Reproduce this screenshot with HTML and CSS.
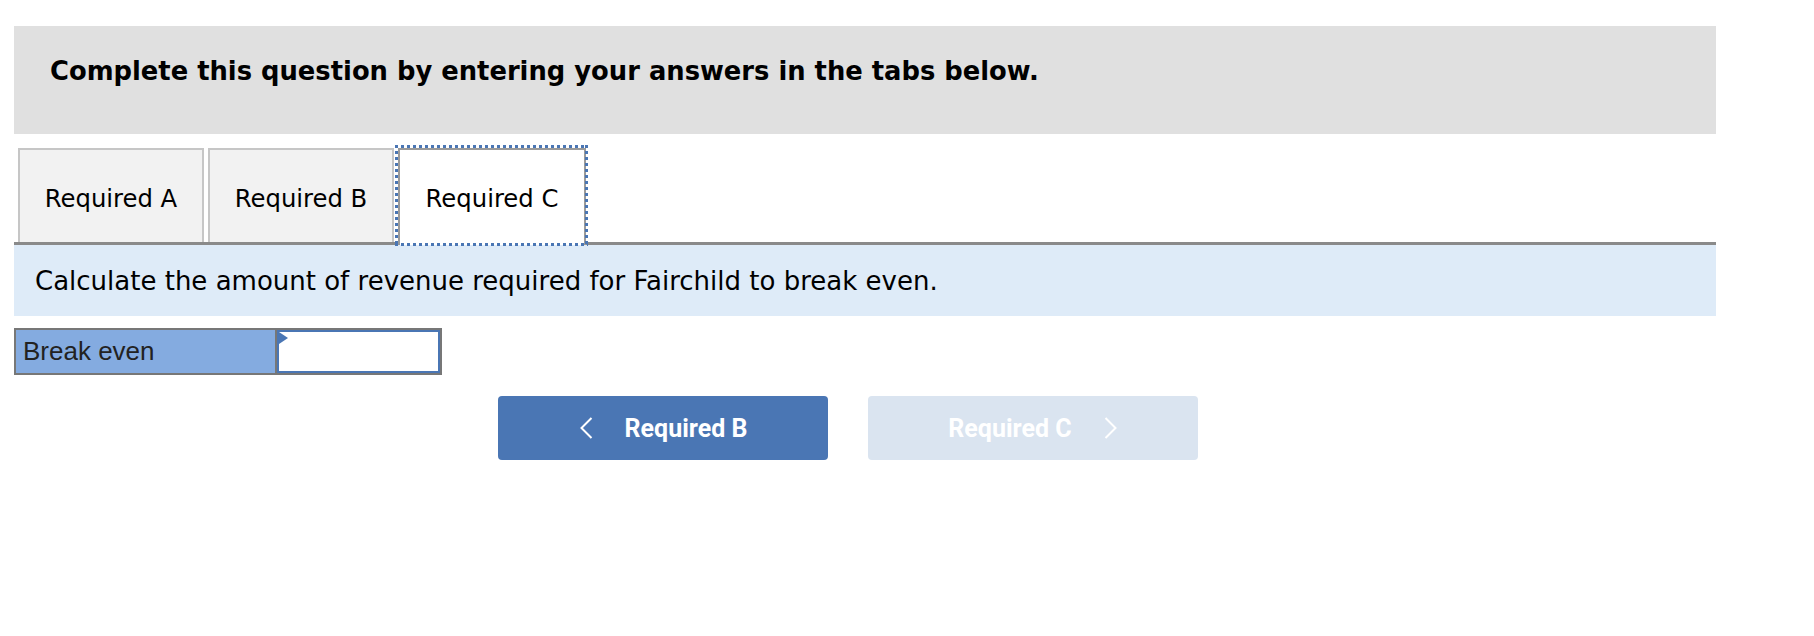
FILE: index.html
```html
<!DOCTYPE html>
<html lang="en">
<head>
<meta charset="utf-8">
<title>Required C</title>
<link rel="stylesheet" href="styles.css">
</head>
<body>
<div class="page">
  <div class="header">
    <p class="header-text">Complete this question by entering your answers in the tabs below.</p>
  </div>
  <div class="tabs">
    <div class="tab">Required A</div>
    <div class="tab">Required B</div>
    <div class="tab tab-active">Required C</div>
  </div>
  <div class="band">Calculate the amount of revenue required for Fairchild to break even.</div>
  <div class="answer-row">
    <div class="answer-label">Break even</div>
    <div class="answer-input"><span class="flag"></span></div>
  </div>
  <div class="nav">
    <div class="btn btn-prev">
      <svg class="chev" width="14" height="24" viewBox="0 0 14 24"><path d="M12.5 2 L2.5 12 L12.5 22" fill="none" stroke="#fff" stroke-width="2"/></svg>
      <span>Required B</span>
    </div>
    <div class="btn btn-next">
      <span>Required C</span>
      <svg class="chev" width="14" height="24" viewBox="0 0 14 24"><path d="M1.5 2 L11.5 12 L1.5 22" fill="none" stroke="#fff" stroke-width="2"/></svg>
    </div>
  </div>
</div>
</body>
</html>
```
FILE: styles.css
```css
html, body {
  margin: 0;
  padding: 0;
  background: #fff;
}
.page {
  padding: 26px 0 0 14px;
  width: 1702px;
  font-family: "DejaVu Sans", Verdana, sans-serif;
  color: #000;
}
.header {
  background: #e0e0e0;
  height: 108px;
  box-sizing: border-box;
  padding: 31px 0 0 36px;
}
.header-text {
  margin: 0;
  font-weight: bold;
  font-size: 25.8px;
  line-height: 29px;
}
.tabs {
  margin-top: 14px;
  display: flex;
  padding-left: 4px;
  border-bottom: 3px solid #8a8a8a;
}
.tab {
  width: 186px;
  height: 94px;
  box-sizing: border-box;
  border: 2px solid #c6c6c6;
  border-bottom: none;
  background: #f2f2f2;
  display: flex;
  align-items: center;
  justify-content: center;
  padding-top: 5px;
  font-size: 24.3px;
  margin-right: 4px;
}
.tab-active {
  position: relative;
  background: #fff;
  border-color: #9a9a9a;
  width: 188px;
  height: 97px;
  margin-bottom: -3px;
  padding-bottom: 3px;
}
.tab-active::after {
  content: "";
  position: absolute;
  top: -5px;
  left: -5px;
  right: -4px;
  bottom: -1px;
  background:
    repeating-linear-gradient(90deg, #4a76b4 0 3px, transparent 3px 6px) top left / 100% 3px no-repeat,
    repeating-linear-gradient(90deg, #4a76b4 0 3px, transparent 3px 6px) bottom left / 100% 3px no-repeat,
    repeating-linear-gradient(180deg, #4a76b4 0 3px, transparent 3px 6px) top left / 3px 100% no-repeat,
    repeating-linear-gradient(180deg, #4a76b4 0 3px, transparent 3px 6px) top right / 3px 100% no-repeat;
}
.band {
  background: #deebf8;
  height: 71px;
  box-sizing: border-box;
  padding-left: 21px;
  display: flex;
  align-items: center;
  font-size: 26px;
}
.answer-row {
  margin-top: 12px;
  width: 428px;
  height: 47px;
  box-sizing: border-box;
  border: 2px solid #777;
  display: flex;
}
.answer-label {
  width: 259px;
  background: #84abe0;
  display: flex;
  align-items: center;
  padding-left: 7px;
  box-sizing: border-box;
  font-family: "Liberation Sans", Arial, sans-serif;
  font-size: 26px;
  color: #222;
}
.answer-input {
  position: relative;
  flex: 1;
  border-left: 2px solid #777;
  box-shadow: inset 0 0 0 2px #4a76b4;
  background: #fff;
}
.flag {
  position: absolute;
  left: 2px;
  top: 2px;
  width: 0;
  height: 0;
  border-top: 6px solid transparent;
  border-bottom: 6px solid transparent;
  border-left: 9px solid #4a76b4;
}
.nav {
  margin-top: 21px;
  padding-left: 484px;
  display: flex;
  gap: 40px;
}
.btn {
  width: 330px;
  height: 64px;
  border-radius: 4px;
  display: flex;
  align-items: center;
  justify-content: center;
  gap: 32px;
  font-family: Roboto, "Liberation Sans", sans-serif;
  font-weight: bold;
  font-size: 25px;
  color: #fff;
}
.btn-prev {
  background: #4a76b4;
}
.btn-next {
  background: #dae4f0;
}
.chev {
  display: block;
}
```
